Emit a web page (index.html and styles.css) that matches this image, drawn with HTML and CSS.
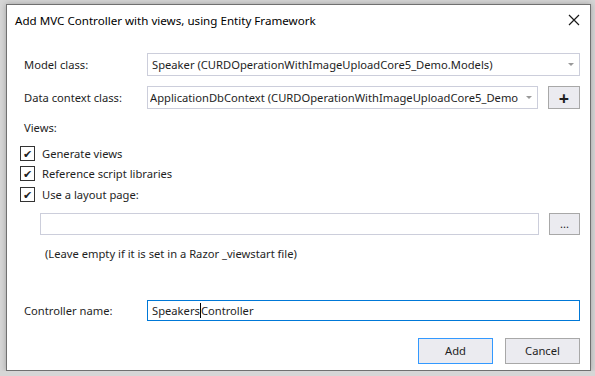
FILE: index.html
```html
<!DOCTYPE html>
<html lang="en">
<head>
  <meta charset="UTF-8">
  <title>Add MVC Controller with views, using Entity Framework</title>
  <link rel="stylesheet" href="styles.css">
</head>
<body>
  <div class="dialog">
    <div class="titlebar">
      <span class="title">Add MVC Controller with views, using Entity Framework</span>
      <span class="close">
        <svg width="12" height="12" viewBox="0 0 12 12"><path d="M1 1 L11 11 M11 1 L1 11" stroke="#1a1a1a" stroke-width="1.2" fill="none"/></svg>
      </span>
    </div>

    <div class="content">
      <div class="row first">
        <label class="lbl">Model class:</label>
        <div class="combo">
          <span class="value">Speaker (CURDOperationWithImageUploadCore5_Demo.Models)</span>
          <span class="arrow"></span>
        </div>
      </div>

      <div class="row">
        <label class="lbl">Data context class:</label>
        <div class="combo-wrap">
          <div class="combo narrow">
            <span class="value">ApplicationDbContext (CURDOperationWithImageUploadCore5_Demo</span>
            <span class="arrow"></span>
          </div>
          <button class="btn plus">+</button>
        </div>
      </div>

      <div class="views-label">Views:</div>

      <div class="checks">
        <div class="check"><span class="box">✔</span>Generate views</div>
        <div class="check"><span class="box">✔</span>Reference script libraries</div>
        <div class="check"><span class="box">✔</span>Use a layout page:</div>
      </div>

      <div class="layout-row">
        <div class="textbox"></div>
        <button class="btn browse">...</button>
      </div>
      <div class="hint">(Leave empty if it is set in a Razor _viewstart file)</div>

      <div class="row controller">
        <label class="lbl">Controller name:</label>
        <div class="textbox focused">Speakers<span class="caret"></span>Controller</div>
      </div>

      <div class="actions">
        <button class="btn action default">Add</button>
        <button class="btn action">Cancel</button>
      </div>
    </div>
  </div>
</body>
</html>
```

FILE: styles.css
```css
body {
  margin: 0;
  padding: 4px 0 0 6px;
  background: #d6d6d6;
  font-family: "Noto Sans", "Open Sans", sans-serif;
  font-size: 11.2px;
  color: #1e1e1e;
}

.dialog {
  box-sizing: border-box;
  width: 585px;
  height: 367px;
  background: #fff;
  border: 1px solid #707070;
  box-shadow: 0 0 6px rgba(0, 0, 0, 0.25);
}

/* Title bar */
.titlebar {
  display: flex;
  justify-content: space-between;
  align-items: center;
  height: 30px;
  padding: 0 10px 0 8px;
}
.title {
  font-size: 11.6px;
  color: #000;
}
.close {
  display: flex;
}

.content {
  padding: 0 10px 0 17px;
}

.row {
  display: flex;
  align-items: center;
  margin-top: 10px;
}
.row.first {
  margin-top: 18px;
}
.lbl {
  width: 123px;
  flex-shrink: 0;
  color: #1e1e1e;
}

.combo {
  box-sizing: border-box;
  flex: 1;
  height: 23px;
  display: flex;
  align-items: center;
  justify-content: space-between;
  border: 1px solid #cccedb;
  padding: 0 5px 0 4px;
  overflow: hidden;
  white-space: nowrap;
}
.combo.narrow {
  padding-left: 2px;
}
.combo .value {
  overflow: hidden;
}
.arrow {
  flex-shrink: 0;
  margin-left: 4px;
  width: 0;
  height: 0;
  border-left: 3px solid transparent;
  border-right: 3px solid transparent;
  border-top: 3px solid #999;
}
.combo-wrap {
  flex: 1;
  display: flex;
  gap: 10px;
  min-width: 0;
}

.btn {
  font-family: inherit;
  font-size: 11.2px;
  color: #1e1e1e;
  background: #ebebf0;
  border: 1px solid #a8a8a8;
  padding: 0;
  cursor: pointer;
}
.plus {
  width: 32px;
  height: 23px;
  font-size: 18px;
  font-weight: bold;
  line-height: 18px;
}

.views-label {
  margin-top: 11px;
  height: 16px;
}

.checks {
  margin-top: 9px;
  display: flex;
  flex-direction: column;
  gap: 4px;
  margin-left: -4px;
}
.check {
  display: flex;
  align-items: center;
  gap: 7px;
  height: 16.5px;
}
.box {
  box-sizing: border-box;
  width: 15px;
  height: 15px;
  border: 1px solid #333;
  font-size: 11px;
  line-height: 13px;
  text-align: center;
  color: #1e1e1e;
}

.layout-row {
  display: flex;
  gap: 10px;
  margin-top: 10px;
  margin-left: 16px;
}
.textbox {
  box-sizing: border-box;
  flex: 1;
  height: 22px;
  border: 1px solid #cccedb;
}
.browse {
  width: 31px;
  height: 22px;
  line-height: 12px;
}
.hint {
  margin-top: 11px;
  margin-left: 21px;
}

.row.controller {
  margin-top: 39px;
}
.textbox.focused {
  height: 21px;
  border-color: #0078d7;
  display: flex;
  align-items: center;
  padding-left: 4px;
}
.caret {
  display: inline-block;
  width: 1px;
  height: 15px;
  background: #000;
}

.actions {
  display: flex;
  justify-content: flex-end;
  gap: 12px;
  margin-top: 17px;
}
.action {
  width: 75px;
  height: 26px;
}
.action.default {
  border-color: #3399ff;
}
```
